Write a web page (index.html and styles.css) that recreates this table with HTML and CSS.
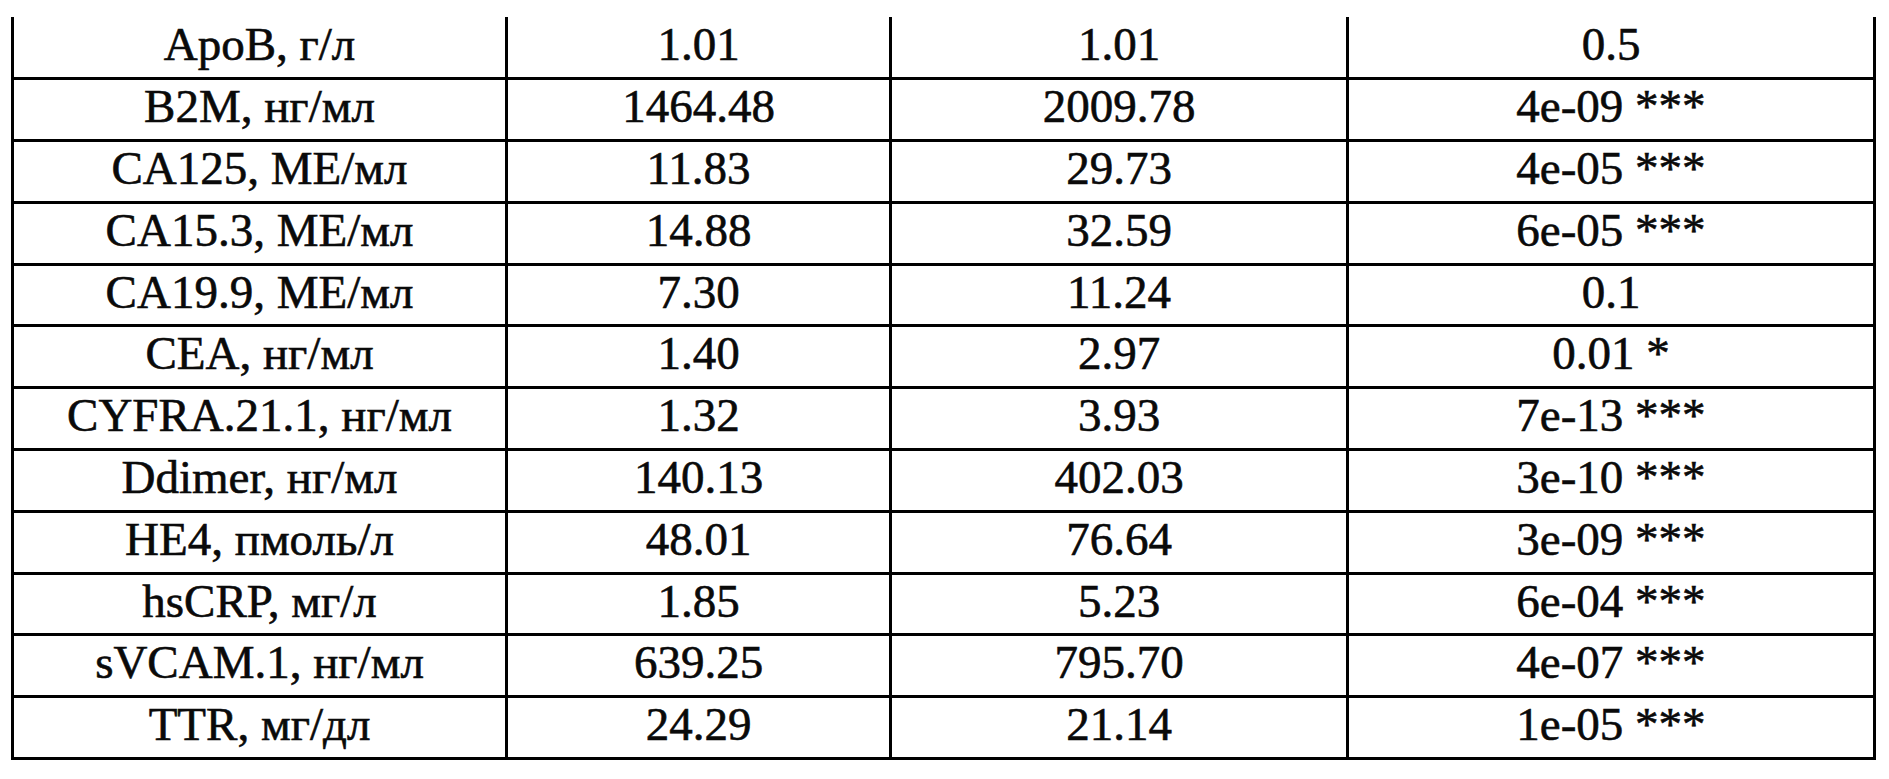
FILE: index.html
```html
<!DOCTYPE html>
<html lang="ru">
<head>
<meta charset="utf-8">
<title>Таблица</title>
<link rel="stylesheet" href="styles.css">
</head>
<body>
<table class="data">
  <colgroup>
    <col class="c1"><col class="c2"><col class="c3"><col class="c4">
  </colgroup>
  <tbody>
    <tr><td>ApoB, г/л</td><td>1.01</td><td>1.01</td><td>0.5</td></tr>
    <tr><td>B2M, нг/мл</td><td>1464.48</td><td>2009.78</td><td>4e-09 ***</td></tr>
    <tr><td>CA125, МЕ/мл</td><td>11.83</td><td>29.73</td><td>4e-05 ***</td></tr>
    <tr><td>CA15.3, МЕ/мл</td><td>14.88</td><td>32.59</td><td>6e-05 ***</td></tr>
    <tr><td>CA19.9, МЕ/мл</td><td>7.30</td><td>11.24</td><td>0.1</td></tr>
    <tr><td>CEA, нг/мл</td><td>1.40</td><td>2.97</td><td>0.01 *</td></tr>
    <tr><td>CYFRA.21.1, нг/мл</td><td>1.32</td><td>3.93</td><td>7e-13 ***</td></tr>
    <tr><td>Ddimer, нг/мл</td><td>140.13</td><td>402.03</td><td>3e-10 ***</td></tr>
    <tr><td>HE4, пмоль/л</td><td>48.01</td><td>76.64</td><td>3e-09 ***</td></tr>
    <tr><td>hsCRP, мг/л</td><td>1.85</td><td>5.23</td><td>6e-04 ***</td></tr>
    <tr><td>sVCAM.1, нг/мл</td><td>639.25</td><td>795.70</td><td>4e-07 ***</td></tr>
    <tr><td>TTR, мг/дл</td><td>24.29</td><td>21.14</td><td>1e-05 ***</td></tr>
  </tbody>
</table>
</body>
</html>
```

FILE: styles.css
```css
html, body {
  margin: 0;
  padding: 0;
  background: #ffffff;
}

body {
  padding: 17px 0 0 11px;
  font-family: "Liberation Serif", "Times New Roman", serif;
  color: #0a0a0a;
}

.data {
  border-collapse: collapse;
  table-layout: fixed;
  width: 1862px;
  font-size: 47px;
  line-height: 1;
}

.c1 { width: 494px; }
.c2 { width: 384px; }
.c3 { width: 457px; }
.c4 { width: 527px; }

.data td {
  border: 3px solid #000;
  text-align: center;
  vertical-align: middle;
  height: 61.8px;
  padding: 0 4px 6px 4px;
  box-sizing: border-box;
  white-space: nowrap;
  -webkit-text-stroke: 0.6px #0a0a0a;
}

.data tr:first-child td {
  border-top: none;
}
```
